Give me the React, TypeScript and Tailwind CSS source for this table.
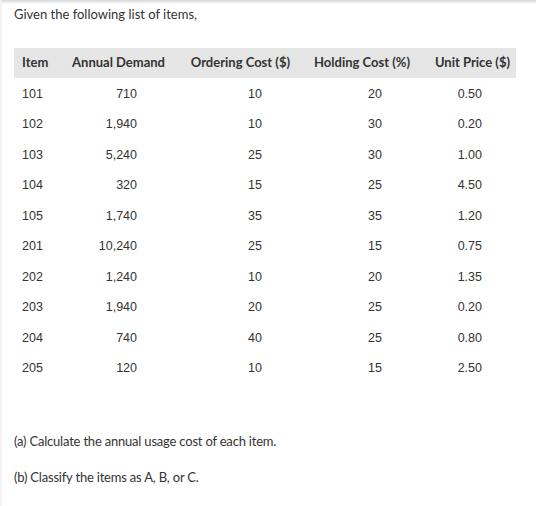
import React from "react";

const rows = [
  ["101", "710", "10", "20", "0.50"],
  ["102", "1,940", "10", "30", "0.20"],
  ["103", "5,240", "25", "30", "1.00"],
  ["104", "320", "15", "25", "4.50"],
  ["105", "1,740", "35", "35", "1.20"],
  ["201", "10,240", "25", "15", "0.75"],
  ["202", "1,240", "10", "20", "1.35"],
  ["203", "1,940", "20", "25", "0.20"],
  ["204", "740", "40", "25", "0.80"],
  ["205", "120", "10", "15", "2.50"],
];

export default function App() {
  return (
    <div className="relative min-h-[506px] w-[536px] bg-white border-l-2 border-[#f3f3f3] text-[#333] font-['Lato','Noto_Sans',sans-serif]">
      {/* top shadow */}
      <div className="absolute left-0 right-0 top-0 h-[4px] bg-gradient-to-b from-[#d6d6d6] to-transparent" />
      <div className="pl-[12px] pt-[4px]">
        <p className="text-[13px] leading-[20px]">Given the following list of items,</p>

        <table className="mt-[24px] w-[502px] table-fixed border-collapse">
          <colgroup>
            <col className="w-[46px]" />
            <col className="w-[117px]" />
            <col className="w-[125px]" />
            <col className="w-[121px]" />
            <col className="w-[93px]" />
          </colgroup>
          <thead>
            <tr className="bg-[#e6e6e6] h-[30px] text-[13px] font-bold">
              <th className="text-left pl-[8px] font-bold">Item</th>
              <th className="text-right pr-[12px] font-bold">Annual Demand</th>
              <th className="text-right pr-[12px] font-bold">Ordering Cost ($)</th>
              <th className="text-right pr-[13px] font-bold">Holding Cost (%)</th>
              <th className="text-right pr-[6px] font-bold">Unit Price ($)</th>
            </tr>
          </thead>
          <tbody className="font-['Liberation_Sans',Arial,sans-serif] text-[12.5px]">
            {rows.map((r) => (
              <tr key={r[0]} className="h-[30.5px]">
                <td className="text-left pl-[8px] pt-[2px]">{r[0]}</td>
                <td className="text-right pr-[40px] pt-[2px]">{r[1]}</td>
                <td className="text-right pr-[40px] pt-[2px]">{r[2]}</td>
                <td className="text-right pr-[41px] pt-[2px]">{r[3]}</td>
                <td className="text-right pr-[34px] pt-[2px]">{r[4]}</td>
              </tr>
            ))}
          </tbody>
        </table>

        <p className="mt-[48px] text-[13px] leading-[20px] tracking-[-0.2px]">(a) Calculate the annual usage cost of each item.</p>
        <p className="mt-[16px] text-[13px] leading-[20px] tracking-[-0.2px]">(b) Classify the items as A, B, or C.</p>
      </div>
    </div>
  );
}
